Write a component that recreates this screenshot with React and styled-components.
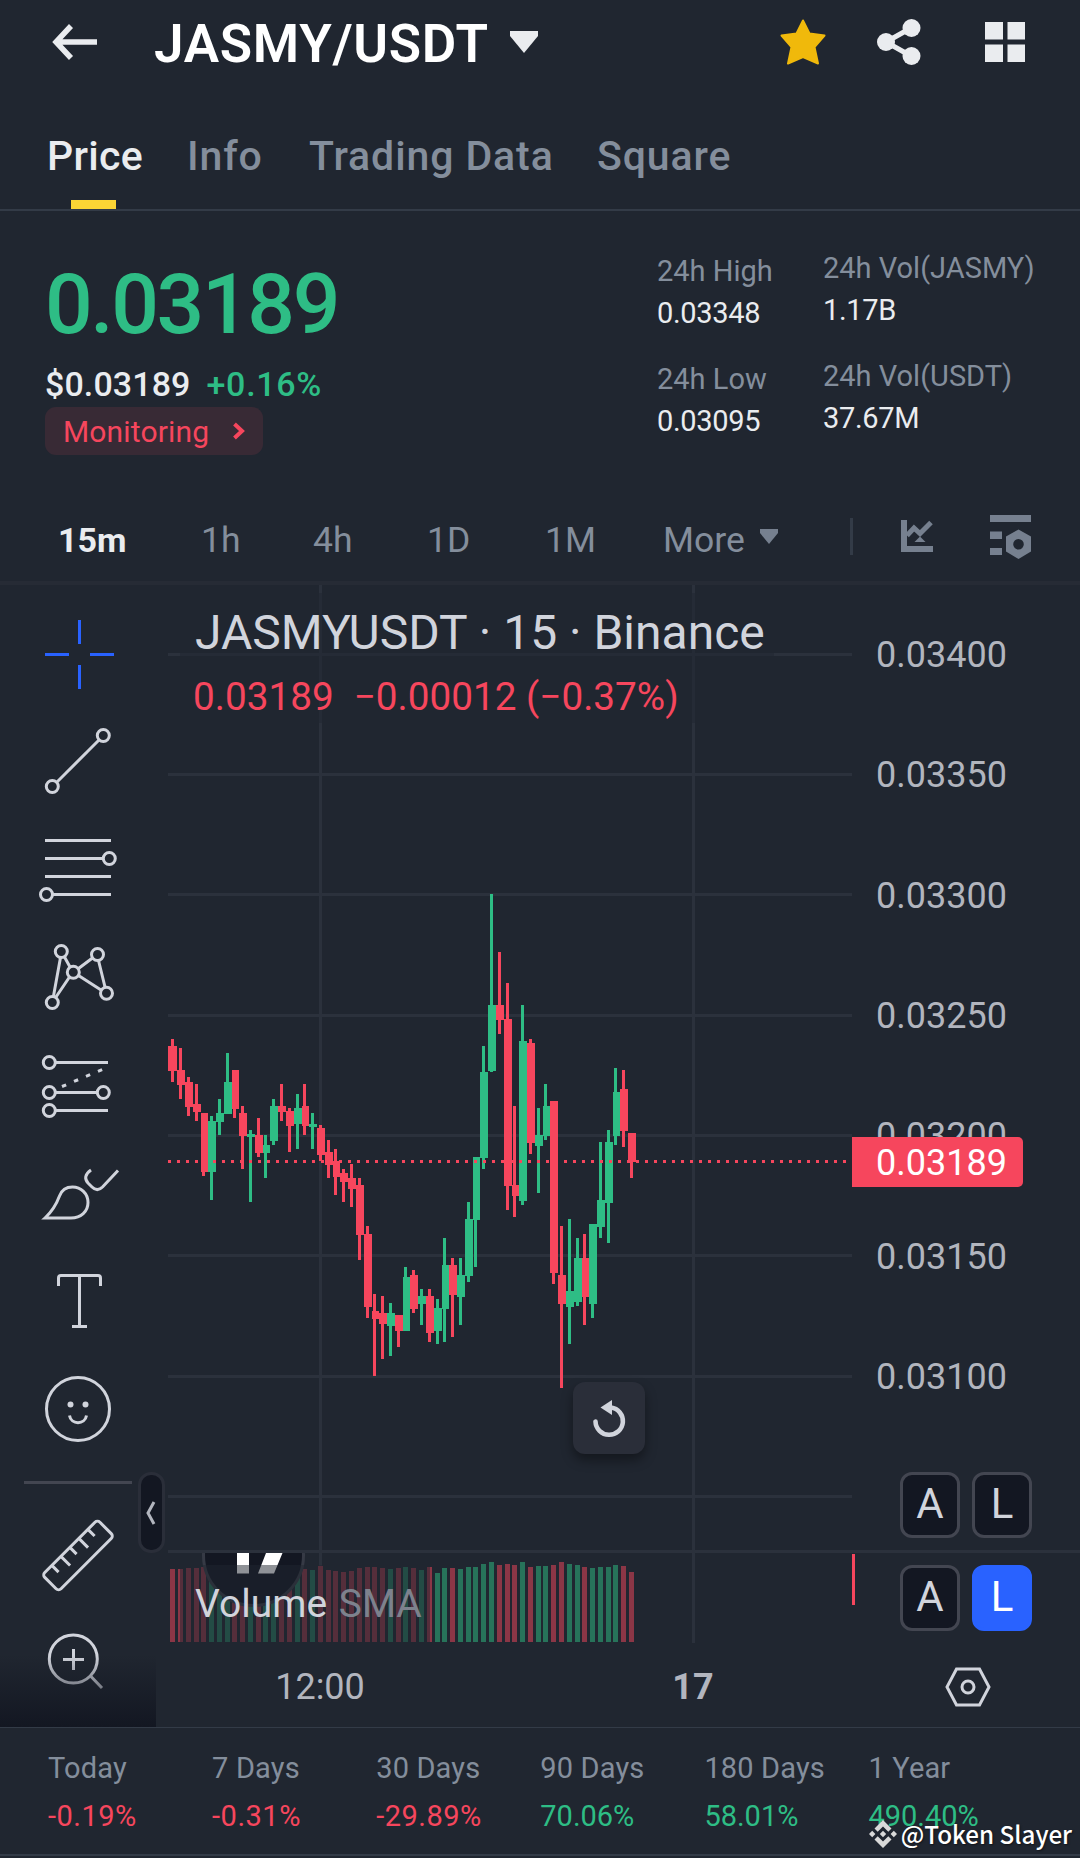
import styled, { createGlobalStyle, css } from 'styled-components';

const BG = '#202630';
const RED = '#f6465d';
const GREEN = '#2ebd85';
const GREY = '#848e9c';
const LIGHT = '#eaecef';
const CHART_TEXT = '#d1d4dc';
const AXIS_TEXT = '#b2b5be';
const GRID = '#2b313c';
const font = "Roboto, 'Liberation Sans', sans-serif";

// [up, high, body top, body bottom, low, volume]
const candles = [
    [0, 520, 540, 613, 645, 73],
    [0, 546, 610, 653, 694, 73],
    [0, 630, 645, 717, 743, 74],
    [0, 650, 709, 732, 758, 74],
    [0, 735, 735, 906, 918, 75],
    [1, 743, 758, 906, 987, 72],
    [1, 694, 735, 761, 799, 72],
    [1, 560, 645, 738, 738, 74],
    [0, 610, 610, 723, 749, 74],
    [0, 714, 735, 801, 897, 73],
    [1, 784, 796, 804, 993, 72],
    [0, 749, 799, 851, 862, 73],
    [1, 799, 828, 851, 923, 73],
    [1, 694, 714, 816, 828, 74],
    [0, 650, 714, 732, 758, 74],
    [0, 720, 729, 772, 848, 73],
    [1, 679, 720, 767, 839, 73],
    [0, 650, 714, 772, 799, 73],
    [1, 735, 767, 775, 839, 72],
    [0, 769, 778, 857, 874, 76],
    [0, 813, 848, 886, 923, 72],
    [0, 839, 874, 920, 973, 71],
    [0, 897, 909, 935, 993, 70],
    [0, 883, 923, 955, 1008, 71],
    [0, 923, 944, 1089, 1161, 74],
    [0, 1063, 1086, 1298, 1330, 75],
    [0, 1260, 1310, 1333, 1498, 75],
    [0, 1266, 1315, 1347, 1449, 74],
    [1, 1286, 1315, 1353, 1440, 73],
    [0, 1321, 1321, 1368, 1414, 74],
    [1, 1182, 1211, 1368, 1368, 75],
    [0, 1191, 1205, 1304, 1315, 74],
    [1, 1246, 1266, 1289, 1350, 72],
    [0, 1246, 1266, 1373, 1400, 75],
    [1, 1275, 1301, 1368, 1405, 69],
    [1, 1098, 1176, 1304, 1400, 74],
    [0, 1156, 1176, 1263, 1385, 74],
    [1, 1156, 1205, 1269, 1350, 73],
    [1, 993, 1042, 1208, 1225, 75],
    [1, 862, 862, 1045, 1182, 75],
    [1, 540, 616, 865, 897, 78],
    [1, 99, 421, 613, 616, 80],
    [0, 267, 421, 465, 505, 77],
    [0, 357, 462, 947, 1016, 78],
    [0, 714, 944, 976, 1037, 77],
    [1, 421, 526, 990, 1002, 80],
    [0, 520, 531, 822, 854, 75],
    [1, 720, 799, 830, 967, 76],
    [1, 650, 714, 801, 813, 76],
    [0, 700, 700, 1199, 1231, 77],
    [0, 1063, 1205, 1289, 1533, 80],
    [1, 1042, 1251, 1298, 1405, 78],
    [1, 1098, 1156, 1283, 1295, 77],
    [0, 1086, 1156, 1269, 1350, 75],
    [1, 1057, 1057, 1289, 1330, 74],
    [1, 819, 987, 1066, 1098, 75],
    [1, 784, 819, 996, 1112, 75],
    [1, 604, 674, 801, 828, 77],
    [0, 610, 665, 787, 833, 76],
    [0, 793, 793, 877, 923, 70],
];

const wickX = (i) => Math.floor(3.68 + 7.776 * i);
const toY = (v) => Math.round(275 + v * 0.34439);

const gridRows = [68, 188, 308, 429, 549, 669, 790, 910];
const prices = ['0.03400', '0.03350', '0.03300', '0.03250', '0.03200', '0.03150', '0.03100'];

const tabs = ['Price', 'Info', 'Trading Data', 'Square'];

const stats = [
    { label: '24h High', value: '0.03348' },
    { label: '24h Low', value: '0.03095' },
];
const volumes = [
    { label: '24h Vol(JASMY)', value: '1.17B' },
    { label: '24h Vol(USDT)', value: '37.67M' },
];

const performance = [
    { label: 'Today', value: '-0.19%' },
    { label: '7 Days', value: '-0.31%' },
    { label: '30 Days', value: '-29.89%' },
    { label: '90 Days', value: '70.06%', up: true },
    { label: '180 Days', value: '58.01%', up: true },
    { label: '1 Year', value: '490.40%', up: true },
];

function MainChart() {
    return (
        <PlotSvg width="684" height="965" viewBox="0 0 684 965" shapeRendering="crispEdges">
            {gridRows.map((y) => <rect key={y} x="0" y={y} width="684" height="3" fill={GRID} />)}
            <rect x="151" y="0" width="3" height="965" fill={GRID} />
            <rect x="524" y="0" width="3" height="965" fill={GRID} />
            {candles.map(([up, high, top, bottom, low], i) => {
                const x = wickX(i);
                const left = i === 0 ? 0 : wickX(i - 1) + 6;
                return (
                    <g key={i} fill={up ? GREEN : RED}>
                        <rect x={x} y={toY(high)} width="3" height={toY(low) - toY(high)} />
                        <rect x={left} y={toY(top)} width={x + 6 - left} height={toY(bottom) - toY(top)} />
                    </g>
                );
            })}
            <line x1="0" y1="576.5" x2="684" y2="576.5" stroke={RED} strokeWidth="3" strokeDasharray="3 6" />
        </PlotSvg>
    );
}

function VolumeChart() {
    return (
        <PlotSvg width="687" height="90" viewBox="0 0 687 90">
            <rect x="151" y="0" width="3" height="90" fill={GRID} />
            <rect x="524" y="0" width="3" height="90" fill={GRID} />
            {candles.map(([up, , , , , volume], i) => (
                <rect
                    key={i}
                    x={wickX(i) - 1}
                    y={89 - volume}
                    width="5"
                    height={volume}
                    fill={up ? '#27735a' : '#8b3646'}
                />
            ))}
            <circle cx="85.5" cy="2.5" r="50" fill="#131722" stroke="#363a45" strokeWidth="3" />
            <path d="M69 0h12v20.500H69zM98 0h16.500l-8.500 20.500H90z" fill="#fff" />
            <rect x="684" y="1" width="3" height="51" fill={RED} />
        </PlotSvg>
    );
}

const toolIcons = {
    cross: (
        <path d="M21 54.500H45M66 54.500H90M55.500 20V44M55.500 65V89" stroke="#2962ff" />
    ),
    trend: (
        <>
            <path d="M33 74L75 32" />
            <circle cx="28.300" cy="78.500" r="6" />
            <circle cx="79.300" cy="27.500" r="6" />
        </>
    ),
    fib: (
        <>
            <path d="M21 24.500H87M21 42.500H79M21 60.500H87M29 78.500H87" />
            <circle cx="85.300" cy="42.500" r="6" />
            <circle cx="22.500" cy="78.500" r="6" />
        </>
    ),
    pattern: (
        <>
            <path d="M36.500 33.500L29.500 72M40.500 33L46 43M54.500 44.500L68.500 34M74.500 36.500L81 63M54.500 51.500L77 66M45.500 53L32 73" />
            <circle cx="37.300" cy="27.500" r="6" />
            <circle cx="73.500" cy="30.500" r="6" />
            <circle cx="49.300" cy="48.300" r="6" />
            <circle cx="28.300" cy="78.500" r="6" />
            <circle cx="82.500" cy="69.300" r="6" />
        </>
    ),
    forecast: (
        <>
            <path d="M32 30.500H84M32 60.500H73M32 78.500H84" />
            <path d="M38 54.500L81 36.500" strokeDasharray="4.500 8.500" />
            <circle cx="25.300" cy="30.500" r="6" />
            <circle cx="25.300" cy="60.500" r="6" />
            <circle cx="79.300" cy="60.500" r="6" />
            <circle cx="25.300" cy="78.500" r="6" />
        </>
    ),
    brush: (
        <>
            <path d="M21 78H47C57 78 64 71.500 64 62.500C64 53.500 57 47 48.500 47C42 47 37.500 50.500 35.500 56C32.500 64 27.500 72 21 78Z" />
            <path d="M67 30C60.500 34.500 60.500 39 64 43L68 47C71.500 50.500 75 50.500 78.500 47L94 30.500" />
        </>
    ),
    text: (
        <path d="M34.500 38V30Q34.500 27.500 37 27.500H74Q76.500 27.500 76.500 30V38M55.500 28V78M48 78.500H63" />
    ),
    smile: (
        <>
            <circle cx="54" cy="53" r="31.500" />
            <path d="M45.500 59.500C47 69 61 69 62.500 59.500" />
            <circle cx="46.500" cy="48.500" r="3" fill={CHART_TEXT} stroke="none" />
            <circle cx="61.500" cy="48.500" r="3" fill={CHART_TEXT} stroke="none" />
        </>
    ),
    ruler: (
        <g transform="translate(54 54.500) rotate(-45)">
            <rect x="-39" y="-11.500" width="78" height="23" rx="3.500" />
            <path d="M-25.500 -11.500V-2M-12.700 -11.500V1.500M0 -11.500V-2M12.700 -11.500V1.500M25.500 -11.500V-2" />
        </g>
    ),
    zoom: (
        <>
            <circle cx="49.300" cy="50" r="24" />
            <path d="M39 50.500H60M49.500 40V61M67 67.500L78 79" />
        </>
    ),
};

function Tool({ name }) {
    return (
        <ToolSvg viewBox="0 0 108 108">{toolIcons[name]}</ToolSvg>
    );
}

function App() {
    return (
        <>
            <GlobalStyle />
            <Page>
                <Header>
                    <svg width="46" height="36" viewBox="0 0 46 36" fill="none" stroke={LIGHT} strokeWidth="5.500">
                        <path d="M45 18H5M19 2L4 18L19 34" />
                    </svg>
                    <Pair>JASMY/USDT</Pair>
                    <svg width="30" height="22" viewBox="0 0 30 22" fill={LIGHT}>
                        <path d="M1 0H29V5L15 22L1 5Z" />
                    </svg>
                    <HeaderIcons>
                        <svg width="46" height="46" viewBox="0 0 46 46" fill="#f0b90b" stroke="#f0b90b" strokeWidth="2" strokeLinejoin="round">
                            <path d="M23 1.500L29.500 14.500L44.500 16.500L34.500 28L38 44.500L23 38L8 44.500L11.500 28L1.500 16.500L16.500 14.500Z" />
                        </svg>
                        <svg width="46" height="46" viewBox="0 0 46 46" fill={LIGHT}>
                            <path d="M10 23L35 9M10 23L35 37" stroke={LIGHT} strokeWidth="5" />
                            <circle cx="10" cy="23" r="9" />
                            <circle cx="35.500" cy="9" r="9" />
                            <circle cx="35.500" cy="37" r="9" />
                        </svg>
                        <svg width="40" height="40" viewBox="0 0 40 40" fill={LIGHT}>
                            <path d="M0 0H18V17.500H0ZM22.500 0H40V17.500H22.500ZM0 22.500H18V40H0ZM22.500 22.500H40V40H22.500Z" />
                        </svg>
                    </HeaderIcons>
                </Header>

                <Tabs>
                    {tabs.map((tab, i) => (
                        <Tab key={tab} $active={i === 0}>{tab}</Tab>
                    ))}
                </Tabs>

                <Summary>
                    <PriceBlock>
                        <LastPrice>0.03189</LastPrice>
                        <Fiat>
                            $0.03189 <Change>+0.16%</Change>
                        </Fiat>
                        <Badge>
                            Monitoring
                            <svg width="14" height="18" viewBox="0 0 14 18" fill="none" stroke={RED} strokeWidth="4">
                                <path d="M2.500 2L10 9L2.500 16" />
                            </svg>
                        </Badge>
                    </PriceBlock>
                    <StatColumn $top={39}>
                        {stats.map((s) => (
                            <Stat key={s.label}>
                                <StatLabel>{s.label}</StatLabel>
                                <StatValue>{s.value}</StatValue>
                            </Stat>
                        ))}
                    </StatColumn>
                    <StatColumn $top={36}>
                        {volumes.map((s) => (
                            <Stat key={s.label}>
                                <StatLabel>{s.label}</StatLabel>
                                <StatValue>{s.value}</StatValue>
                            </Stat>
                        ))}
                    </StatColumn>
                </Summary>

                <Intervals>
                    <Interval $active>15m</Interval>
                    <Interval>1h</Interval>
                    <Interval>4h</Interval>
                    <Interval>1D</Interval>
                    <Interval>1M</Interval>
                    <Interval>
                        More
                        <Caret width="20" height="15" viewBox="0 0 20 15">
                            <path d="M1 0H19V4L10 15L1 4Z" />
                        </Caret>
                    </Interval>
                    <Divider />
                    <svg width="34" height="34" viewBox="0 0 34 34" fill="none" stroke="#76808f">
                        <path d="M3 0V29H32" strokeWidth="6" />
                        <path d="M6 15.500L13 8L19 13.500L30 2.500" strokeWidth="5" />
                        <path d="M13.500 22L19 16.500L24.500 22Z" fill="#76808f" stroke="none" />
                    </svg>
                    <svg width="42" height="44" viewBox="0 0 42 44" fill="#76808f">
                        <path d="M0 0H41V7H0ZM0 16.500H12V24H0ZM0 33H12V40H0Z" />
                        <path fillRule="evenodd" d="M28.500 14.500L41 21.500V36.500L28.500 44L16 36.500V21.500ZM28.500 24A5.300 5.300 0 1 0 28.500 34.600A5.300 5.300 0 1 0 28.500 24Z" />
                    </svg>
                </Intervals>

                <Chart>
                    <Rail>
                        <Tool name="cross" />
                        <Tool name="trend" />
                        <Tool name="fib" />
                        <Tool name="pattern" />
                        <Tool name="forecast" />
                        <Tool name="brush" />
                        <Tool name="text" />
                        <Tool name="smile" />
                        <RailLine />
                        <Tool name="ruler" />
                        <Tool name="zoom" />
                        <RailFade />
                        <RailToggle>
                            <svg width="10" height="24" viewBox="0 0 10 24" fill="none" stroke={AXIS_TEXT} strokeWidth="3">
                                <path d="M8 1L2 12L8 23" />
                            </svg>
                        </RailToggle>
                    </Rail>
                    <Panes>
                        <MainPane>
                            <MainChart />
                            <Axis>
                                {prices.map((p) => <PriceLabel key={p}>{p}</PriceLabel>)}
                                <ScaleButtons $top={34}>
                                    <ScaleButton>A</ScaleButton>
                                    <ScaleButton>L</ScaleButton>
                                </ScaleButtons>
                            </Axis>
                            <Legend>
                                <Symbol>JASMYUSDT · 15 · Binance</Symbol>
                                <Quote><span>0.03189</span><span>−0.00012 (−0.37%)</span></Quote>
                            </Legend>
                            <PriceTag>0.03189</PriceTag>
                            <ResetButton>
                                <svg width="36" height="40" viewBox="0 0 36 40" fill="none">
                                    <path d="M4.500 23.500A13.700 13.700 0 1 0 20 9.500" stroke={CHART_TEXT} strokeWidth="4.600" strokeLinecap="round" />
                                    <path d="M9.500 9.500L21 2V17Z" fill={CHART_TEXT} />
                                </svg>
                            </ResetButton>
                        </MainPane>
                        <VolumePane>
                            <VolumeChart />
                            <ScaleButtons $top={12}>
                                <ScaleButton>A</ScaleButton>
                                <ScaleButton $on>L</ScaleButton>
                            </ScaleButtons>
                            <VolumeLegend>Volume <Muted>SMA</Muted></VolumeLegend>
                        </VolumePane>
                        <TimeAxis>
                            <TimeLabel>12:00</TimeLabel>
                            <TimeLabel $bold>17</TimeLabel>
                            <svg width="46" height="40" viewBox="0 0 46 40" fill="none" stroke={CHART_TEXT} strokeWidth="3">
                                <path d="M11.500 2H34.500L44 20L34.500 38H11.500L2 20Z" />
                                <circle cx="23" cy="20" r="6" />
                            </svg>
                        </TimeAxis>
                    </Panes>
                </Chart>

                <Performance>
                    {performance.map((p) => (
                        <div key={p.label}>
                            <PerfLabel>{p.label}</PerfLabel>
                            <PerfValue $up={p.up}>{p.value}</PerfValue>
                        </div>
                    ))}
                </Performance>
                <Watermark>
                    <svg width="28" height="28" viewBox="0 0 28 28" fill="#d9d9d9">
                        <path d="M14 0L22.500 8.500L19.300 11.700L14 6.400L8.700 11.700L5.500 8.500ZM14 28L5.500 19.500L8.700 16.300L14 21.600L19.300 16.300L22.500 19.500ZM14 10.800L17.200 14L14 17.200L10.800 14ZM3.200 10.800L6.400 14L3.200 17.200L0 14ZM24.800 10.800L28 14L24.800 17.200L21.600 14Z" />
                    </svg>
                    @Token Slayer
                </Watermark>
            </Page>
        </>
    );
}

const GlobalStyle = createGlobalStyle`
    * {
        box-sizing: border-box;
    }
    body {
        margin: 0;
        background: ${BG};
        font-family: ${font};
    }
    svg {
        display: block;
        flex-shrink: 0;
    }
`

const Page = styled.div`
    position: relative;
    width: 1080px;
    height: 1858px;
    overflow: hidden;
    background: ${BG};
    color: ${LIGHT};
`

const Header = styled.header`
    display: flex;
    align-items: center;
    height: 83px;
    padding: 0 55px 0 52px;
`

const Pair = styled.h1`
    margin: 4px 21px 0 56px;
    width: 334px;
    font-size: 53px;
    font-weight: 600;
    line-height: 60px;
    letter-spacing: 0.7px;
    color: #fff;
    white-space: nowrap;
`

const HeaderIcons = styled.div`
    display: flex;
    align-items: center;
    margin-left: auto;

    svg:nth-child(2) {
        margin: 0 63px 0 50px;
    }
`

const Tabs = styled.nav`
    display: grid;
    grid-template-columns: 140px 122px 288px 1fr;
    height: 128px;
    padding: 0 0 0 47px;
    border-bottom: 2px solid #333b47;
`

const Tab = styled.div`
    display: flex;
    flex-direction: column;
    justify-content: space-between;
    padding-top: 48px;
    font-size: 41px;
    font-weight: 500;
    line-height: 50px;
    letter-spacing: ${({ $active }) => ($active ? 0.3 : 0.9)}px;
    white-space: nowrap;
    color: ${({ $active }) => ($active ? LIGHT : GREY)};

    ${({ $active }) => $active && css`
        &::after {
            content: '';
            width: 45px;
            height: 9px;
            margin-left: 24px;
            background: #fcd535;
        }
    `}
`

const Summary = styled.section`
    display: grid;
    grid-template-columns: 612px 166px 1fr;
    height: 289px;
    padding-left: 45px;
`

const PriceBlock = styled.div`
    display: flex;
    flex-direction: column;
    align-items: flex-start;
    padding-top: 48px;
`

const LastPrice = styled.div`
    font-size: 84px;
    font-weight: 500;
    line-height: 92px;
    letter-spacing: -2.4px;
    color: ${GREEN};
`

const Fiat = styled.div`
    display: flex;
    gap: 16px;
    margin-top: 13px;
    font-size: 34px;
    font-weight: 500;
    line-height: 40px;
    letter-spacing: 0.1px;
`

const Change = styled.span`
    letter-spacing: 0.7px;
    color: ${GREEN};
`

const Badge = styled.div`
    display: flex;
    align-items: center;
    justify-content: space-between;
    width: 218px;
    height: 48px;
    margin-top: 3px;
    padding: 0 17px 0 18px;
    border-radius: 11px;
    background: #382a35;
    color: ${RED};
    font-size: 30px;
    letter-spacing: 0.15px;
`

const StatColumn = styled.div`
    padding-top: ${({ $top }) => $top}px;
`

const Stat = styled.div`
    height: 108px;
    font-size: 29px;
    line-height: 42px;
    white-space: nowrap;
`

const StatLabel = styled.div`
    color: ${GREY};
`

const StatValue = styled.div`
    letter-spacing: -0.3px;
`

const Intervals = styled.nav`
    display: grid;
    grid-template-columns: 143px 112px 114px 118px 118px 187px 51px 89px 1fr;
    align-items: center;
    height: 85px;
    padding: 0 0 8px 58px;
    border-bottom: 4px solid #262b35;
`

const Interval = styled.div`
    display: flex;
    align-items: center;
    padding-top: 6px;
    font-size: ${({ $active }) => ($active ? 34 : 35.5)}px;
    font-weight: ${({ $active }) => ($active ? 700 : 400)};
    color: ${({ $active }) => ($active ? LIGHT : GREY)};
`

const Caret = styled.svg`
    margin: -6px 0 0 14px;
    fill: #76808f;
`

const Divider = styled.div`
    width: 3px;
    height: 37px;
    background: #333b47;
`

const Chart = styled.section`
    display: grid;
    grid-template-columns: 168px 1fr;
    height: 1142px;
`

const Rail = styled.aside`
    position: relative;
    display: flex;
    flex-direction: column;
    padding: 15px 0 0 24px;
`

const ToolSvg = styled.svg`
    width: 108px;
    height: 108px;
    fill: none;
    stroke: ${CHART_TEXT};
    stroke-width: 3;
`

const RailLine = styled.div`
    width: 108px;
    height: 3px;
    margin: 17px 0;
    background: #434651;
`

const RailFade = styled.div`
    position: absolute;
    left: 0;
    bottom: 0;
    width: 156px;
    height: 72px;
    background: linear-gradient(rgba(19, 23, 34, 0), #131722);
`

const RailToggle = styled.div`
    position: absolute;
    top: 887px;
    left: 138px;
    display: flex;
    align-items: center;
    justify-content: center;
    width: 27px;
    height: 81px;
    padding-right: 1px;
    border: 3px solid #2a2e39;
    border-radius: 13px;
    background: #131722;
`

const Panes = styled.div`
    display: flex;
    flex-direction: column;
`

const MainPane = styled.div`
    position: relative;
    display: grid;
    grid-template-columns: 684px 1fr;
    height: 968px;
    border-bottom: 3px solid ${GRID};
`

const PlotSvg = styled.svg`
    overflow: hidden;
`

const Axis = styled.div`
    padding-top: 10px;
`

const PriceLabel = styled.div`
    height: 120.36px;
    padding-left: 24px;
    font-size: 36px;
    line-height: 120px;
    color: ${AXIS_TEXT};
`

const ScaleButtons = styled.div`
    display: flex;
    gap: 12px;
    margin-top: ${({ $top }) => $top}px;
    padding-left: 48px;
`

const ScaleButton = styled.button`
    width: 60px;
    height: 66px;
    padding: 0 0 2px;
    border: 3px solid ${({ $on }) => ($on ? '#2962ff' : '#434651')};
    border-radius: 12px;
    background: ${({ $on }) => ($on ? '#2962ff' : '#131722')};
    color: ${({ $on }) => ($on ? '#fff' : CHART_TEXT)};
    font-family: ${font};
    font-size: 42px;
    line-height: 50px;
`

const Legend = styled.div`
    position: absolute;
    top: 8px;
    left: 12px;
    width: 594px;
    height: 130px;
    padding-left: 13px;
    background: rgba(32, 38, 48, 0.5);
    white-space: nowrap;
`

const Symbol = styled.div`
    padding: 8px 0 0 2px;
    font-size: 48px;
    line-height: 64px;
    color: ${CHART_TEXT};
`

const Quote = styled.div`
    display: flex;
    gap: 20px;
    font-size: 38.7px;
    line-height: 64px;
    color: ${RED};
`

const PriceTag = styled.div`
    position: absolute;
    top: 552px;
    left: 684px;
    width: 171px;
    height: 50px;
    padding-left: 24px;
    border-radius: 0 5px 5px 0;
    background: ${RED};
    color: #fff;
    font-size: 36px;
    line-height: 52px;
`

const ResetButton = styled.div`
    position: absolute;
    top: 797px;
    left: 405px;
    display: flex;
    align-items: center;
    justify-content: center;
    width: 72px;
    height: 72px;
    border-radius: 12px;
    background: #2a2e39;
    box-shadow: 0 6px 12px rgba(0, 0, 0, 0.4);
`

const VolumePane = styled.div`
    position: relative;
    display: grid;
    grid-template-columns: 684px 1fr;
    height: 90px;
`

const VolumeLegend = styled.div`
    position: absolute;
    top: 12px;
    left: 12px;
    width: 250px;
    height: 78px;
    padding: 9px 0 0 15px;
    background: rgba(32, 38, 48, 0.5);
    font-size: 39px;
    line-height: 60px;
    color: ${CHART_TEXT};
    white-space: nowrap;
`

const Muted = styled.span`
    margin-left: 2px;
    color: #7d828d;
`

const TimeAxis = styled.div`
    display: grid;
    grid-template-columns: 304px 442px 1fr;
    align-items: center;
    height: 84px;

    svg {
        margin: 3px 0 0 31px;
    }
`

const TimeLabel = styled.div`
    padding-top: 4px;
    text-align: center;
    font-size: 36px;
    font-weight: ${({ $bold }) => ($bold ? 700 : 400)};
    color: ${AXIS_TEXT};
`

const Performance = styled.footer`
    display: grid;
    grid-template-columns: repeat(6, 164.1px);
    height: 129px;
    padding: 16px 0 0 48px;
    border-top: 1px solid #333b47;
    border-bottom: 2px solid #333b47;
    font-size: 29px;
    line-height: 48px;
    white-space: nowrap;
`

const PerfLabel = styled.div`
    letter-spacing: 0.15px;
    color: ${GREY};
`

const PerfValue = styled.div`
    letter-spacing: ${({ $up }) => ($up ? 0 : 0.5)}px;
    color: ${({ $up }) => ($up ? GREEN : RED)};
`

const Watermark = styled.div`
    position: absolute;
    right: 8px;
    bottom: 6px;
    display: flex;
    align-items: center;
    gap: 4px;
    font-family: 'Noto Sans CJK SC', 'Noto Sans', sans-serif;
    font-size: 24.2px;
    font-weight: 500;
    line-height: 36px;
    color: #fff;
    text-shadow: 1px 1px 2px rgba(0, 0, 0, 0.5);
`

export default App;
